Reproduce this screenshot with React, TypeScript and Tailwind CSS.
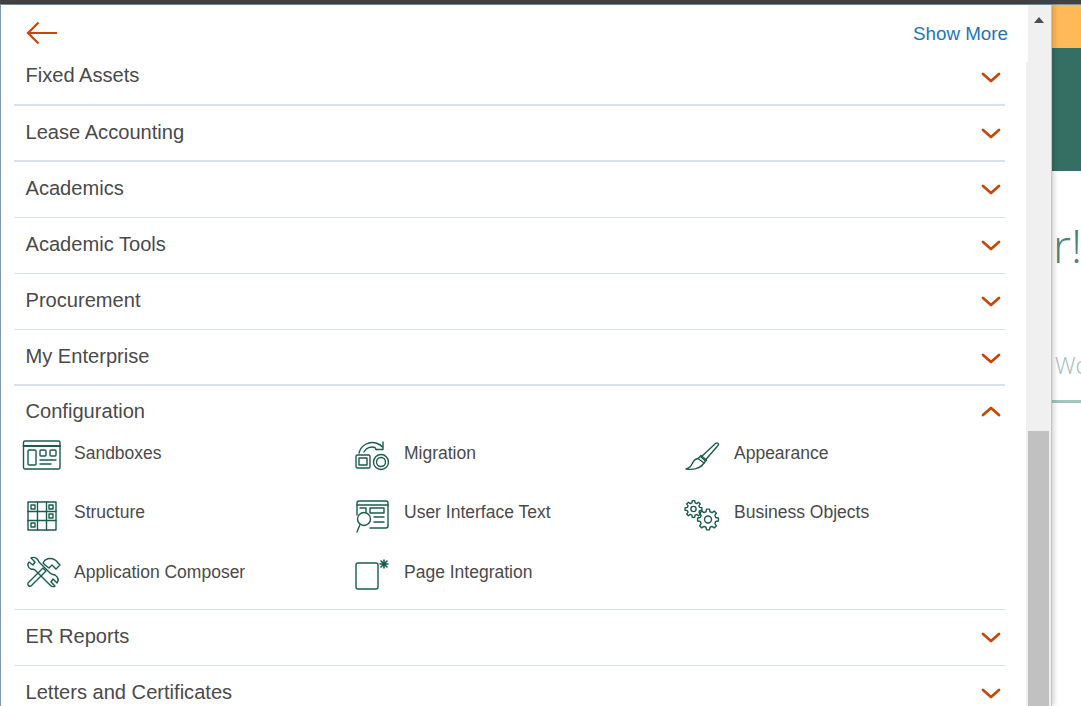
import type { ReactNode } from 'react'

function Chevron({ up = false }: { up?: boolean }) {
  return (
    <svg width="20" height="12" viewBox="0 0 20 12" fill="none" stroke="#c74606" strokeWidth="2.7" strokeLinecap="round" strokeLinejoin="round">
      <path d={up ? 'M2 10 L10 3 L18 10' : 'M2 2 L10 9 L18 2'} />
    </svg>
  )
}

function Row({ label, thick = false, chevronClass = '' }: { label: string; thick?: boolean; chevronClass?: string }) {
  return (
    <div className={`flex h-[56px] items-center justify-between pl-[11.5px] pr-[4px] ${thick ? 'border-b-2 border-[#d8e3ec]' : 'border-b border-[#dbe2e8]'}`}>
      <span className="pb-[3px] text-[20.1px] leading-[30px] text-[#4a4a4a]">{label}</span>
      <div className={chevronClass}>
        <Chevron />
      </div>
    </div>
  )
}

function Icon({ children }: { children: ReactNode }) {
  return (
    <svg width="40" height="36" viewBox="0 0 40 36" fill="none" stroke="#1a5c4e" strokeWidth="1.4" strokeLinecap="round" strokeLinejoin="round" className="shrink-0 overflow-visible">
      {children}
    </svg>
  )
}

// toothed outline for the Business Objects gears
function gearPath(cx: number, cy: number, outer: number, inner: number, teeth: number) {
  const pts: string[] = []
  for (let i = 0; i < teeth; i++) {
    const step = (Math.PI * 2) / teeth
    const a = i * step
    const offsets: [number, number][] = [
      [-0.32, inner],
      [-0.18, outer],
      [0.18, outer],
      [0.32, inner],
    ]
    offsets.forEach(([o, r]) => {
      const t = a + o * step
      pts.push(`${(cx + r * Math.cos(t)).toFixed(2)} ${(cy + r * Math.sin(t)).toFixed(2)}`)
    })
  }
  return `M${pts.join(' L')} Z`
}

const sandboxIcon = (
  <Icon>
    <rect x="0.5" y="6" width="36.500" height="28" rx="1.500" />
    <path d="M0.500 11 H37" strokeWidth="1.800" />
    <rect x="5" y="15" width="8" height="15" rx="1" />
    <rect x="17" y="15" width="6" height="6" rx="1" />
    <rect x="27" y="15" width="6" height="6" rx="1" />
    <path d="M17 25 H33 M17 29 H28" />
  </Icon>
)
const migrationIcon = (
  <Icon>
    <rect x="3" y="20" width="14" height="13" rx="1.500" />
    <rect x="6" y="23" width="8" height="7" />
    <circle cx="28" cy="27" r="7.500" />
    <circle cx="28" cy="27" r="4.500" />
    <path d="M6 18 C8 10 16 6 23 8 C26 9 28 10 29.500 12 M23 14.500 H30 V7" />
    <path d="M11 17 C13 13 18 11 22 12.500 L23 14.500" />
  </Icon>
)
const brushIcon = (
  <Icon>
    <path d="M18 22 L32.500 8.500 C34.500 7 36.500 8.500 35 10.500 L22 25.500 Z" />
    <path d="M15 23.500 L18 20.500 L23.500 25 L21 28 Z" />
    <path d="M15 23.500 C11 24 10 27 9 29 C8 31.500 6 33 3 34 C9 35 17 34 21 28" />
  </Icon>
)
const structureIcon = (
  <Icon>
    <rect x="5" y="7" width="28" height="28" />
    <path d="M14.500 7 V35 M23.500 7 V35 M5 16.500 H33 M5 25.500 H33" />
    <rect x="8" y="10" width="4" height="4" />
    <rect x="26" y="10" width="4" height="4" />
    <rect x="26" y="19" width="4" height="4" />
    <rect x="8" y="28" width="4" height="4" />
  </Icon>
)
const uiTextIcon = (
  <Icon>
    <path d="M4 20 V8 C4 7 5 6 6 6 H33 C34 6 35 7 35 8 V31 C35 32 34 33 33 33 H17" />
    <path d="M4 10 H35" />
    <rect x="17" y="13" width="14" height="5" />
    <path d="M7 13 H13 V17 M21 22 H31 M21 27 H31" />
    <circle cx="11" cy="24" r="6.500" />
    <path d="M7 29.500 L4 37" />
  </Icon>
)
const gearsIcon = (
  <Icon>
    <path d={gearPath(10.5, 14, 8.5, 6.3, 8)} />
    <circle cx="10.500" cy="14" r="2.600" />
    <path d={gearPath(25, 24.5, 10.5, 8, 8)} />
    <circle cx="25" cy="24.500" r="3.500" />
  </Icon>
)
const composerIcon = (
  <Icon>
    <path d="M8 4 L12 8 L10 11 L6 8 C4 10 5 14 8 15 C10 15.500 11 15 12 16 L27 31 C29 33 31 33 32 32 L28 28 L30 25 L34 29 C36 26 35 23 32 21 C30 20 29 21 27 19 L16 8 C15 5 12 2 8 4 Z" />
    <path d="M5 29 L20 14 L23 17 L8 32 C6.500 33 4 31 5 29 Z" />
    <path d="M20 9 C23 3 31 3 35 9 L37 11 L33 15 L29 11 L26 14 L22 11 Z" />
  </Icon>
)
const pageIcon = (
  <Icon>
    <rect x="3" y="9" width="22" height="26" rx="2" />
    <path d="M27 10 H35 M31 6 V14 M28 7 L34 13 M34 7 L28 13" strokeWidth="1.600" />
  </Icon>
)

const items = [
  { label: 'Sandboxes', icon: sandboxIcon },
  { label: 'Migration', icon: migrationIcon },
  { label: 'Appearance', icon: brushIcon },
  { label: 'Structure', icon: structureIcon },
  { label: 'User Interface Text', icon: uiTextIcon },
  { label: 'Business Objects', icon: gearsIcon },
  { label: 'Application Composer', icon: composerIcon },
  { label: 'Page Integration', icon: pageIcon },
]

export default function App() {
  return (
    <div className="flex h-[706px] w-[1081px] flex-col overflow-hidden bg-white font-['Liberation_Sans',Arial,sans-serif]">
      {/* Top edge of the browser */}
      <div className="h-[5px] shrink-0 border-b border-[#7b93a6] bg-[#424242]" />

      <div className="flex min-h-0 flex-1">
        {/* Navigator panel */}
        <div className="relative z-10 flex w-[1052px] shrink-0 border-l border-r border-l-[#7b9ab5] border-r-[#c4c4c4] bg-[#f0f0f0] shadow-[2px_0_5px_rgba(0,0,0,0.18)]">
          <div className="flex w-[1027px] shrink-0 flex-col">
            <div className="flex h-[57px] shrink-0 items-start justify-between bg-white pl-[25px] pr-[20px] pt-[17px]">
              <svg width="32" height="24" viewBox="0 0 32 24" fill="none" stroke="#c74606" strokeWidth="2.200" className="-mt-[1px]">
                <path d="M31 12 H2 M12.500 1.500 L2 12 L12.500 22.500" />
              </svg>
              <a className="text-[18.800px] leading-[24px] text-[#1b75bb]">Show More</a>
            </div>

            <div className="mr-[2px] flex-1 bg-white px-[13px]">
              <div className="mr-[8px]">
                <div className="flex h-[44px] items-center justify-between border-b-2 border-[#d8e3ec] pl-[11.5px] pr-[4px]">
                  <span className="pb-[17px] text-[20.1px] leading-[30px] text-[#4a4a4a]">Fixed Assets</span>
                  <div className="mb-[10px]">
                    <Chevron />
                  </div>
                </div>
                <Row label="Lease Accounting" thick chevronClass="mt-[2px]" />
                <Row label="Academics" />
                <Row label="Academic Tools" />
                <Row label="Procurement" />
                <Row label="My Enterprise" thick chevronClass="mt-[4px]" />

                {/* Configuration, expanded */}
                <div className="h-[224px] border-b border-[#dbe2e8]">
                  <div className="flex h-[49px] items-center justify-between pl-[11.5px] pr-[4px]">
                    <span className="text-[20.1px] leading-[30px] text-[#4a4a4a]">Configuration</span>
                    <Chevron up />
                  </div>
                  <div className="grid auto-rows-[59.5px] grid-cols-[330px_330px_1fr] pl-[9px]">
                    {items.map((item) => (
                      <div key={item.label} className="flex h-[36px] items-center gap-[11px]">
                        {item.icon}
                        <span className="text-[17.500px] text-[#4a4a4a]">{item.label}</span>
                      </div>
                    ))}
                  </div>
                </div>

                <Row label="ER Reports" chevronClass="mt-[1px]" />
                <Row label="Letters and Certificates" chevronClass="mt-[1px]" />
              </div>
            </div>
          </div>

          {/* Scrollbar */}
          <div className="flex flex-1 flex-col pr-[2px]">
            <div className="flex h-[426px] justify-center pt-[12px]">
              <div className="h-0 w-0 border-x-[5.500px] border-b-[6px] border-x-transparent border-b-[#4d4d4d]" />
            </div>
            <div className="flex-1 bg-[#c1c1c1]" />
          </div>
        </div>

        {/* Page behind the panel */}
        <div className="flex min-w-0 flex-1 flex-col overflow-hidden">
          <div className="h-[43px] shrink-0 bg-[#ffb957]" />
          <div className="h-[123px] shrink-0 bg-[#356f63]" />
          <div className="h-[229px] shrink-0 overflow-hidden pl-[3px]">
            <div className="-ml-[2px] mt-[42px] font-['Open_Sans',sans-serif] text-[46px] font-light leading-[64px] text-[#4a8276]">r!</div>
            <div className="mt-[73px] whitespace-nowrap font-['Open_Sans',sans-serif] text-[23px] font-light leading-[30px] text-[#9dbcb6]">Work</div>
          </div>
          <div className="h-[3px] shrink-0 bg-[#a5c4bd]" />
        </div>
      </div>
    </div>
  )
}
